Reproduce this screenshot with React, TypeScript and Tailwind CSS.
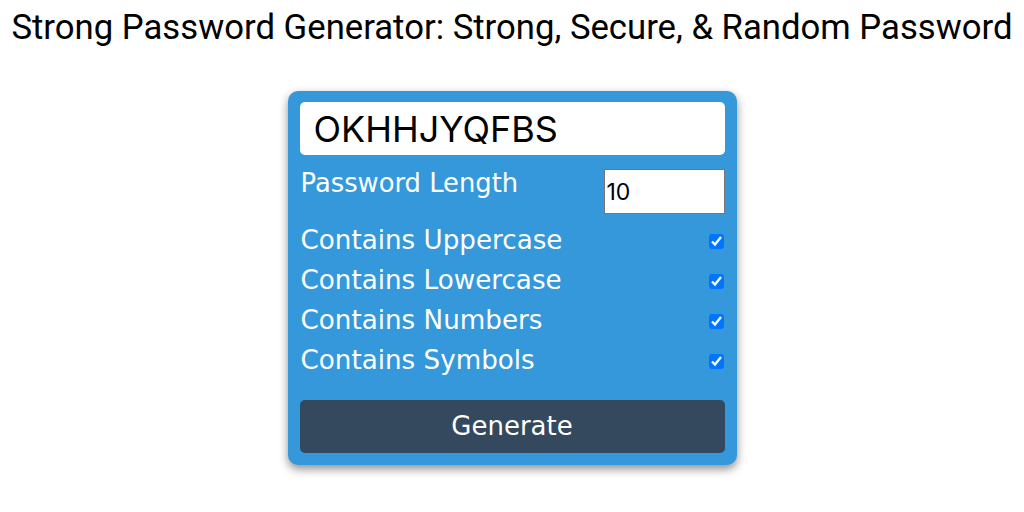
import React from "react";

export default function App() {
  const rows = ["Contains Uppercase", "Contains Lowercase", "Contains Numbers", "Contains Symbols"];
  const f = { fontFamily: "'DejaVu Sans', sans-serif" };
  return (
    <div className="min-h-[512px] bg-white">
      <h1
        className="text-center text-[34.7px] leading-[54px] text-black font-normal"
        style={{ fontFamily: "Roboto, sans-serif" }}
      >
        Strong Password Generator: Strong, Secure, &amp; Random Password
      </h1>
      <div
        className="mx-auto mt-[37px] w-[449px] rounded-[10px] bg-[#3498db] px-[12px] pt-[11px] pb-[12px] shadow-[0_4px_10px_rgba(0,0,0,0.45)]"
        style={f}
      >
        <div
          className="flex h-[53px] items-center rounded-[5px] bg-white px-[14px] text-[36px] text-black"
          style={{ fontFamily: "Inter, sans-serif" }}
        >
          OKHHJYQFBS
        </div>
        <div className="mt-[14px] flex items-start justify-between">
          <span className="pl-[1px] text-[25.8px] leading-[28px] text-white">Password Length</span>
          <input
            type="number"
            defaultValue={10}
            className="h-[45px] w-[121px] border border-[#767676] bg-white px-[2px] text-[23px] text-black outline-none"
            style={{ fontFamily: "Inter, sans-serif" }}
          />
        </div>
        <div className="mt-[7px] flex flex-col">
          {rows.map((r) => (
            <label key={r} className="flex h-[40px] items-center justify-between text-white">
              <span className="pl-[1px] text-[26.2px]">{r}</span>
              <input type="checkbox" defaultChecked className="mr-[1px] h-[15px] w-[15px] accent-[#0075ff]" />
            </label>
          ))}
        </div>
        <button
          className="mt-[19px] flex h-[53px] w-full items-center justify-center rounded-[5px] bg-[#34495e] text-[26px] text-white"
          style={f}
        >
          Generate
        </button>
      </div>
    </div>
  );
}
